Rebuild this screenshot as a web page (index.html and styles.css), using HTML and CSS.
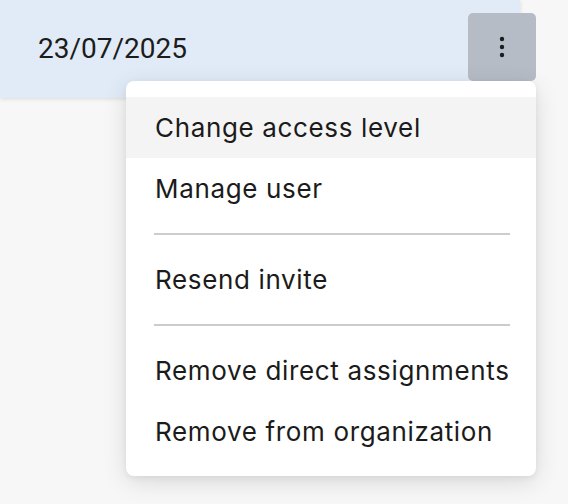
FILE: index.html
```html
<!DOCTYPE html>
<html lang="en">
<head>
    <meta charset="UTF-8">
    <meta name="viewport" content="width=device-width, initial-scale=1.0">
    <title>Members - Row actions</title>
    <link rel="stylesheet" href="styles.css">
</head>
<body>
    <div class="row">
        <span class="row-date">23/07/2025</span>
        <div class="actions">
            <button class="menu-button" aria-label="More actions">
                <svg width="6" height="22" viewBox="0 0 6 22">
                    <circle cx="3" cy="3" r="2.2"/>
                    <circle cx="3" cy="11" r="2.2"/>
                    <circle cx="3" cy="19" r="2.2"/>
                </svg>
            </button>
            <ul class="menu">
                <li class="menu-item active">Change access level</li>
                <li class="menu-item">Manage user</li>
                <li class="menu-divider"></li>
                <li class="menu-item">Resend invite</li>
                <li class="menu-divider"></li>
                <li class="menu-item">Remove direct assignments</li>
                <li class="menu-item">Remove from organization</li>
            </ul>
        </div>
    </div>
</body>
</html>
```

FILE: styles.css
```css
body {
    margin: 0;
    background: #f7f7f7;
    font-family: Inter, "Noto Sans", sans-serif;
    color: #1b1b1b;
    height: 504px;
    overflow: hidden;
}
.row {
    width: 520px;
    height: 98px;
    background: #e1ebf7;
    border-bottom-right-radius: 10px;
    box-shadow: 0 1px 4px rgba(0, 0, 0, 0.12);
    display: flex;
    align-items: flex-start;
    justify-content: space-between;
    box-sizing: border-box;
    padding: 13px 0 0 38px;
}
.row-date {
    font-family: Roboto, sans-serif;
    font-size: 28px;
    margin-top: 19px;
    color: #1c1c1c;
}
.actions {
    position: relative;
    margin-right: -16px;
}
.menu-button {
    width: 68px;
    height: 68px;
    border: none;
    border-radius: 5px;
    background: #b5bcc5;
    display: flex;
    align-items: center;
    justify-content: center;
    padding: 0;
    cursor: pointer;
}
.menu-button svg {
    fill: #1c1c1c;
}
.menu {
    position: absolute;
    top: 68px;
    right: 0;
    width: 410px;
    margin: 0;
    padding: 16px 0 14px;
    list-style: none;
    background: #fff;
    border-radius: 8px;
    box-shadow: 0 6px 24px rgba(0, 0, 0, 0.12), 0 2px 6px rgba(0, 0, 0, 0.06);
    box-sizing: border-box;
}
.menu-item {
    height: 61px;
    display: flex;
    align-items: center;
    padding: 0 29px;
    font-size: 26px;
    letter-spacing: 0.65px;
    white-space: nowrap;
    cursor: pointer;
}
.menu-item.active {
    background: #f4f4f4;
}
.menu-divider {
    height: 2px;
    background: #cccccc;
    margin: 14px 26px 14px 28px;
}
```
